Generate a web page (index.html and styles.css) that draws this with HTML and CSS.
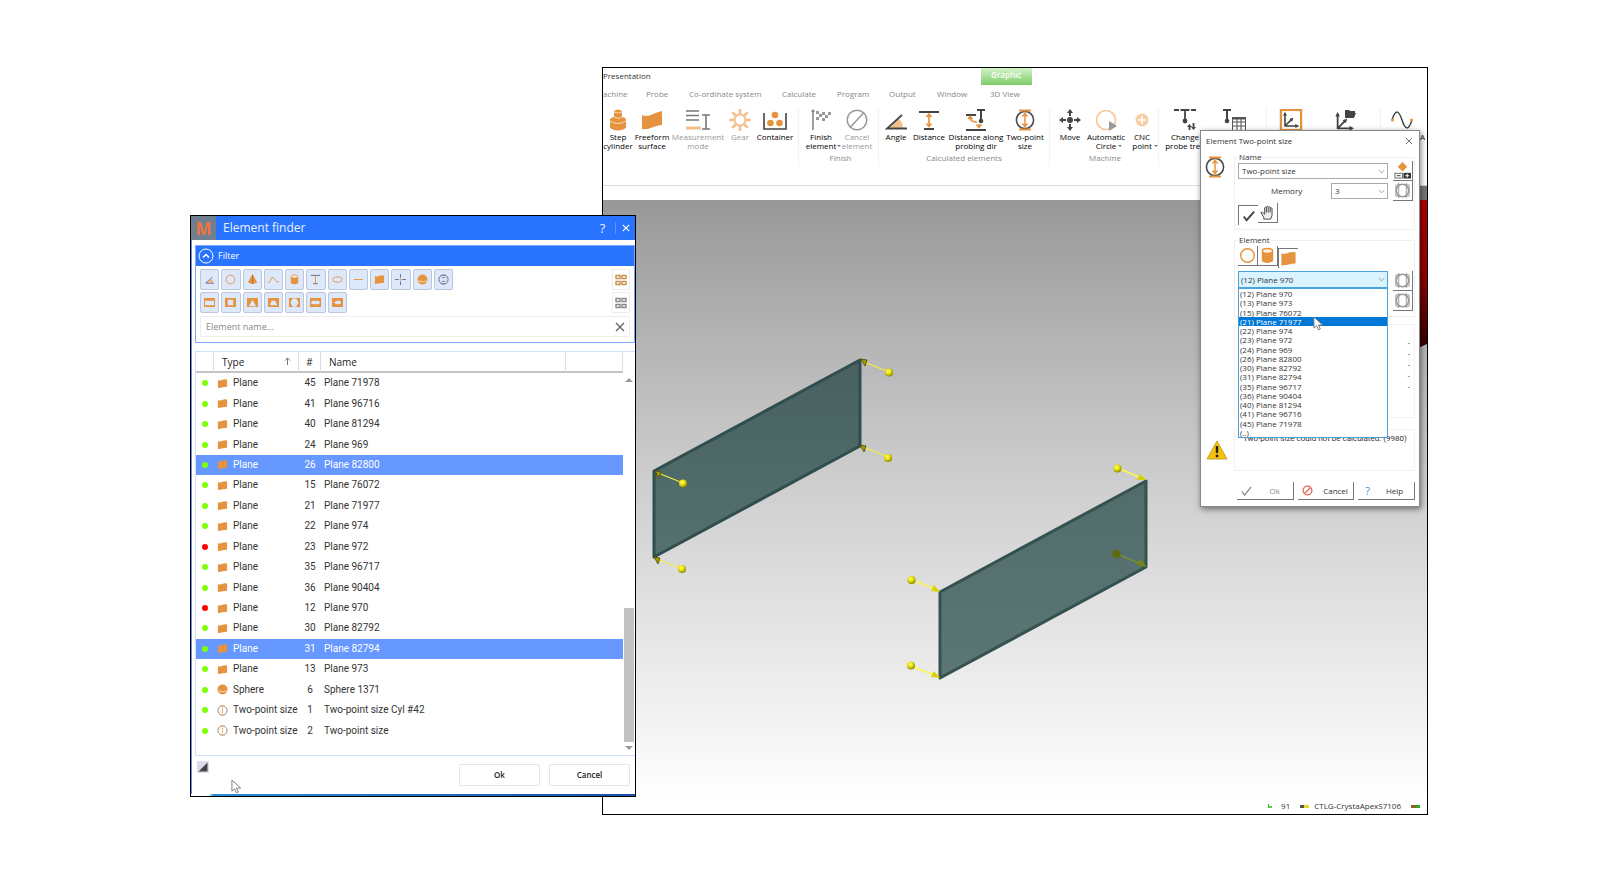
FILE: index.html
```html
<!DOCTYPE html>
<html lang="en">
<head>
<meta charset="utf-8">
<title>Element finder</title>
<link rel="stylesheet" href="styles.css">
</head>
<body>
<svg class="defs" aria-hidden="true">
  <defs>
    <symbol id="plane" viewBox="0 0 12 12"><path d="M1 2.500Q4 3 6 2T11 1.500V9.500Q8 9.500 6 10.200T1 11z" fill="#e5933f"/></symbol>
    <symbol id="sphere" viewBox="0 0 12 12"><circle cx="6" cy="6" r="5.500" fill="#e5933f"/><path d="M1 7.500Q6 9.500 11 7.500" stroke="#fbe0c2" fill="none"/></symbol>
    <symbol id="twopoint" viewBox="0 0 20 22"><circle cx="10" cy="11" r="8.600" fill="none" stroke="#4a4a4a" stroke-width="1.600"/><path d="M4 1.500h12M4 20.500h12" stroke="#e5933f" stroke-width="2"/><path d="M10 5v12M7.500 7.500L10 4.500l2.500 3M7.500 14.500l2.500 3 2.500-3" fill="none" stroke="#e5933f" stroke-width="1.500"/></symbol>
    <symbol id="twosmall" viewBox="0 0 12 12"><circle cx="6" cy="6" r="5" fill="none" stroke="#8f8378"/><path d="M3.500 1h5M3.500 11h5M6 3v6" stroke="#e9a768" fill="none"/></symbol>
    <symbol id="cylinder" viewBox="0 0 12 12"><path d="M2 3v7q4 2.500 8 0V3z" fill="#e5933f"/><ellipse cx="6" cy="2.800" rx="3.600" ry="1.700" fill="#fff1df" stroke="#e5933f"/></symbol>
    <symbol id="ring" viewBox="0 0 12 12"><circle cx="6" cy="6" r="4.800" fill="none" stroke="#e5933f"/></symbol>
    <symbol id="chevron" viewBox="0 0 10 6"><path d="M1 1l4 4 4-4" fill="none" stroke="#777"/></symbol>
    <symbol id="pick" viewBox="0 0 18 18"><rect x="2" y="3" width="14" height="12" rx="1" fill="none" stroke="#aaa" stroke-width="1.300"/><circle cx="9" cy="9" r="6.500" fill="#fff" stroke="#999" stroke-width="1.600"/><path d="M5 1v16M13 1v16" stroke="#999"/></symbol>
    <symbol id="axes" viewBox="0 0 22 22"><path d="M4 2v16h16M4 18l9-9" fill="none" stroke="#444" stroke-width="2"/><path d="M4 0L1.500 5h5zM22 18l-5-2.500v5zM14.500 7.500l-5 1.500 3.500 3.500z" fill="#444"/></symbol>
    <symbol id="grid" viewBox="0 0 12 12"><path d="M1 1.500h4v3H1zM7 1.500h4v3H7zM1 7.500h4v3H1zM7 7.500h4v3H7z" fill="none" stroke="currentColor" stroke-width="1.400"/></symbol>
    <symbol id="pointer" viewBox="0 0 12 16"><path d="M1 1v12l3-2.500 2 4.500 2-1-2-4.300h4.500z" fill="#fff" stroke="#777"/></symbol>
    <linearGradient id="sky" x1="0" y1="0" x2="0" y2="1"><stop offset="0" stop-color="#989898"/><stop offset=".24" stop-color="#b5b5b5"/><stop offset=".42" stop-color="#c9c9c9"/><stop offset=".65" stop-color="#dfdfdf"/><stop offset=".84" stop-color="#f0f0f0"/><stop offset="1" stop-color="#fff"/></linearGradient>
    <linearGradient id="steel" x1="0" y1="0" x2="0" y2="1"><stop offset="0" stop-color="#486160"/><stop offset="1" stop-color="#54706f"/></linearGradient>
    <linearGradient id="steel2" x1="0" y1="0" x2="0" y2="1"><stop offset="0" stop-color="#526c6c"/><stop offset="1" stop-color="#5c7675"/></linearGradient>
    <linearGradient id="red" x1="0" y1="0" x2="0" y2="1"><stop offset="0" stop-color="#b00000"/><stop offset=".5" stop-color="#980000"/><stop offset="1" stop-color="#300"/></linearGradient>
    <radialGradient id="ball" cx=".4" cy=".35" r=".65"><stop offset="0" stop-color="#ffff60"/><stop offset=".5" stop-color="#e6e010"/><stop offset="1" stop-color="#8a8600"/></radialGradient>
  </defs>
</svg>
<main class="desktop">
  <section class="window app" aria-label="Presentation">
    <header class="app-title"><span>Presentation</span><span class="context-tab">Graphic</span></header>
    <nav class="tabs">
      <a href="#" class="t1">achine</a><a href="#" class="t2">Probe</a><a href="#" class="t3">Co-ordinate system</a><a href="#" class="t4">Calculate</a><a href="#" class="t5">Program</a><a href="#" class="t6">Output</a><a href="#" class="t7">Window</a><a href="#" class="t8">3D View</a>
    </nav>
    <div class="ribbon">
      <div class="group g1">
        <div class="tools">
          <button class="tool w30"><svg viewBox="0 0 22 22"><path d="M7 2q4-3 8 0v6q4 .5 4 3v8q-8 5-16 0v-8q0-2.500 4-3z" fill="#e5933f"/><path d="M7 8q4 3 8 0M3 12q8 5 16 0M7 3q4 2 8 0" fill="none" stroke="#fbd9b3"/></svg>Step cylinder</button>
          <button class="tool w38"><svg viewBox="0 0 22 22"><path d="M1 6q5 2 10-.5T21 2v14q-5 0-10 2.500T1 20z" fill="#e5933f"/></svg>Freeform surface</button>
          <button class="tool w54 off"><svg viewBox="0 0 26 22"><path d="M1 2h13M1 6.500h13M1 11h13M17 6h8M17 20h8M21 6v14" fill="none" stroke="#777" stroke-width="1.600"/><path d="M1 19h15" stroke="#f3c08d" stroke-width="3"/></svg>Measurement mode</button>
          <button class="tool w30 off"><svg viewBox="0 0 22 22"><circle cx="11" cy="11" r="5.500" fill="none" stroke="#f4bf8c" stroke-width="2"/><path d="M11 0v5M11 17v5M0 11h5M17 11h5M3.200 3.200l3.500 3.500M15.300 15.300l3.500 3.500M3.200 18.800l3.500-3.500M15.300 6.700l3.500-3.500" stroke="#f4bf8c" stroke-width="2.600"/></svg>Gear</button>
          <button class="tool w40"><svg viewBox="0 0 24 22"><path d="M1 4v16h22V4" fill="none" stroke="#444" stroke-width="1.600"/><circle cx="12" cy="6" r="3.300" fill="#e5933f"/><circle cx="7.500" cy="14" r="3.300" fill="#e5933f"/><circle cx="16.500" cy="14" r="3.300" fill="#e5933f"/></svg>Container</button>
        </div>
      </div>
      <div class="group g2">
        <div class="tools">
          <button class="tool w36"><svg viewBox="0 0 22 22"><path d="M3 1v20" stroke="#888" stroke-width="1.600"/><circle cx="3" cy="2" r="1.600" fill="#888"/><path d="M6 2h3v3H6zM12 3h3v3h-3zM9 5h3v3H9zM15 6h3v3h-3zM6 8h3v3H6zM12 9h3v3h-3zM18 3h3v3h-3z" fill="#999"/></svg>Finish element<i class="drop"></i></button>
          <button class="tool w36 off"><svg viewBox="0 0 22 22"><circle cx="11" cy="11" r="9.800" fill="none" stroke="#999" stroke-width="1.500"/><path d="M4.500 18L17.500 4" stroke="#999" stroke-width="1.500"/></svg>Cancel element</button>
        </div>
        <span class="caption">Finish</span>
      </div>
      <div class="group g3">
        <div class="tools">
          <button class="tool w34"><svg viewBox="0 0 22 22"><path d="M13 9q5 4 5 10H5z" fill="#f3c08d"/><path d="M17 6L2 19.500h20" fill="none" stroke="#444" stroke-width="1.800"/></svg>Angle</button>
          <button class="tool w32"><svg viewBox="0 0 22 22"><path d="M1 3h20M6 20h10" stroke="#444" stroke-width="1.800"/><path d="M11 5v12M8.500 8L11 5l2.500 3M8.500 14.500l2.500 3 2.500-3" fill="none" stroke="#e5933f" stroke-width="1.700"/></svg>Distance</button>
          <button class="tool w62"><svg viewBox="0 0 22 22"><path d="M1 6h10M1 21h20M12 1h8M16 1v11" stroke="#444" stroke-width="2"/><circle cx="16" cy="12" r="2.300" fill="#444"/><path d="M5 8q0 5 7 5M3 10l2-2.500L7.500 10M14 15v3M11.500 15.500l2.500 3 2.500-3" fill="none" stroke="#e5933f" stroke-width="1.600"/></svg>Distance along probing dir</button>
          <button class="tool w36"><svg viewBox="0 0 20 22"><use href="#twopoint"/></svg><span class="keep">Two-point</span>size</button>
        </div>
        <span class="caption">Calculated elements</span>
      </div>
      <div class="group g4">
        <div class="tools">
          <button class="tool w36"><svg viewBox="0 0 22 22"><circle cx="11" cy="11" r="3" fill="#444"/><path d="M11 0l3 4h-2v3h-2V4H8zM11 22l3-4h-2v-3h-2v3H8zM0 11l4-3v2h3v2H4v2zM22 11l-4-3v2h-3v2h3v2z" fill="#444"/></svg>Move</button>
          <button class="tool w36"><svg viewBox="0 0 22 22"><circle cx="11" cy="11" r="9.500" fill="none" stroke="#f6c79a" stroke-width="1.700"/><path d="M14 12l8 5-8 5z" fill="#999"/></svg>Automatic Circle<i class="drop in"></i></button>
          <button class="tool w36"><svg viewBox="0 0 22 22"><circle cx="11" cy="11" r="6.500" fill="#f6cda4"/><path d="M11 7v8M7 11h8" stroke="#fff" stroke-width="1.500"/></svg>CNC point<i class="drop in"></i></button>
        </div>
        <span class="caption">Machine</span>
      </div>
      <div class="group g5">
        <div class="tools">
          <button class="tool w52"><svg viewBox="0 0 22 22"><path d="M0 1h5M6.500 1h9M17 1h5M11 1v11M15.500 17v4M19.500 14v4" fill="none" stroke="#444" stroke-width="1.800"/><circle cx="11" cy="12" r="2.400" fill="#444"/><path d="M15.500 15l2.500 3h-5zM19.500 21l2.500-3h-5z" fill="#444"/></svg>Change probe tree</button>
          <button class="tool w46" aria-label="Probe table"><svg viewBox="0 0 24 22"><path d="M1 1h8M5 1v11" stroke="#444" stroke-width="2"/><circle cx="5" cy="12" r="2.300" fill="#444"/><path d="M10.500 8.500h13v13h-13zM10.500 13h13M10.500 17h13M15 9v13M19 9v13" fill="none" stroke="#555"/><path d="M10 8h14v2.500H10z" fill="#555"/></svg></button>
        </div>
      </div>
      <div class="group g6">
        <div class="tools">
          <button class="tool w48" aria-label="Co-ordinate axes"><svg viewBox="0 0 24 24"><rect x="1" y="1" width="22" height="22" fill="#fff" stroke="#e5933f" stroke-width="2.500"/><use href="#axes" x="2" y="3" width="19" height="19"/></svg></button>
          <button class="tool w60" aria-label="Load axes"><svg viewBox="0 0 22 22"><use href="#axes" y="3" width="20" height="20"/><path d="M11 1h4l1 1h5v2h1l-2 5h-9z" fill="#444"/></svg></button>
        </div>
      </div>
      <div class="group g7">
        <div class="tools">
          <button class="tool w36" aria-label="Curve"><svg viewBox="0 0 22 22"><path d="M1 11C5-1 8 2 11 11s6 12 10 0" fill="none" stroke="#444" stroke-width="1.500"/><circle cx="1.500" cy="11" r="1.500" fill="#e5933f"/><circle cx="20.500" cy="11" r="1.500" fill="#e5933f"/></svg></button>
          <button class="tool w36 edge" aria-label="Analysis"><svg viewBox="0 0 22 22"></svg>A</button>
        </div>
      </div>
    </div>
    <div class="strip"><i></i></div>
    <svg class="scene" viewBox="603 200 824 600" preserveAspectRatio="none" role="img" aria-label="Two measured planes">
      <rect x="603" y="200" width="824" height="600" fill="url(#sky)"/>
      <path d="M1418 200h9v144l-9 4z" fill="url(#red)"/>
      <path d="M860 360V446L654 557V471z" fill="url(#steel)" stroke="#2f4e4d" stroke-width="3" stroke-linejoin="round"/>
      <g stroke="#f2ee3c" stroke-width="1.300"><path d="M864 362l25 10M863 447l25 10M658 473l25 10M657 559l25 10"/></g>
      <g fill="#a39b00" stroke="#4e4a00" stroke-width=".8"><path d="M861 359l6 1-2 6zM860 445l6 1-2 6zM655 471l6 1-2 6zM654 557l6 1-2 6z"/></g>
      <g fill="url(#ball)"><circle cx="889" cy="372.500" r="4"/><circle cx="888" cy="458" r="4"/><circle cx="683" cy="483.500" r="4"/><circle cx="682" cy="569" r="4"/></g>
      <path d="M1146 481V567L940 678V592z" fill="url(#steel2)" stroke="#34524f" stroke-width="3" stroke-linejoin="round"/>
      <path d="M1117 554l24 10" stroke="#8a9420" stroke-width="1.300"/><circle cx="1116.500" cy="554" r="4" fill="#5f6a06"/><path d="M1147 567l-10-2 3-6z" fill="#7a8414"/>
      <g stroke="#fbf84a" stroke-width="1.500"><path d="M1118 468l23 10M912 580l23 9M911 666l23 9"/></g>
      <g fill="#d8d300"><path d="M1146 480l-9 0 3-6zM940 592l-9-1 3-6zM940 678l-9-1 3-6z"/></g>
      <g fill="url(#ball)"><circle cx="1117.500" cy="468.500" r="4"/><circle cx="911.500" cy="580" r="4"/><circle cx="911" cy="665.500" r="4"/></g>
    </svg>
    <footer class="status"><i class="signal"></i><span>91</span><i class="link"></i><span class="machine">CTLG-CrystaApexS7106</span><i class="link ok"></i></footer>
  </section>

  <section class="window finder" aria-label="Element finder">
    <header class="finder-title"><b class="logo">M</b><h1>Element finder</h1><button aria-label="Help">?</button><button class="shut" aria-label="Close"><svg viewBox="0 0 10 10"><path d="M1 1l8 8M9 1L1 9" stroke="#fff" stroke-width="1.500"/></svg></button></header>
    <div class="finder-body">
      <div class="filter">
        <button class="filter-head"><svg viewBox="0 0 16 16"><circle cx="8" cy="8" r="7" fill="none" stroke="#fff"/><path d="M5 9.500l3-3 3 3" fill="none" stroke="#fff" stroke-width="1.500"/></svg>Filter</button>
        <div class="filter-grid">
          <div class="chips">
            <button aria-label="Angle"><svg viewBox="0 0 12 12"><path d="M9 3.500L2 10h9" fill="none" stroke="#667"/><path d="M8 5q2 2 2 4.500H4z" fill="#eab37c"/></svg></button>
            <button aria-label="Circle"><svg viewBox="0 0 12 12"><use href="#ring"/></svg></button>
            <button aria-label="Cone"><svg viewBox="0 0 12 12"><path d="M6 0l5 9q-5 3.500-10 0z" fill="#e5933f"/><path d="M6 1v10" stroke="#b9722c"/></svg></button>
            <button aria-label="Curve"><svg viewBox="0 0 12 12"><path d="M0 9.500q2.500 0 3-3.500t3-1.500 3 3.500 3 0" fill="none" stroke="#e5933f"/></svg></button>
            <button aria-label="Cylinder"><svg viewBox="0 0 12 12"><use href="#cylinder"/></svg></button>
            <button aria-label="Distance"><svg viewBox="0 0 12 12"><path d="M1 1.500h10M3.500 10.500h5" stroke="#667"/><path d="M6 2v8" stroke="#e5933f"/></svg></button>
            <button aria-label="Ellipse"><svg viewBox="0 0 12 12"><ellipse cx="6" cy="6" rx="5" ry="2.800" fill="none" stroke="#e5933f"/></svg></button>
            <button aria-label="Line"><svg viewBox="0 0 12 12"><path d="M1 6h10" stroke="#e5933f"/></svg></button>
            <button aria-label="Plane"><svg viewBox="0 0 12 12"><use href="#plane"/></svg></button>
            <button aria-label="Point"><svg viewBox="0 0 12 12"><path d="M6 0v4M6 8v4M0 6h4M8 6h4" stroke="#5c6f92"/><circle cx="6" cy="6" r="1" fill="#e5933f"/></svg></button>
            <button aria-label="Sphere"><svg viewBox="0 0 12 12"><use href="#sphere"/></svg></button>
            <button aria-label="Two-point size"><svg viewBox="0 0 12 12"><circle cx="6" cy="6" r="5" fill="none" stroke="#667"/><path d="M3 1.500h6M3 10.500h6M4 4h4M4 8h4" stroke="#78829a"/></svg></button>
            <button aria-label="Slot"><svg viewBox="0 0 12 12"><path d="M0 1h12v10H0zM1 4v5h10V4z" fill="#e5933f" fill-rule="evenodd"/></svg></button>
            <button aria-label="Square"><svg viewBox="0 0 12 12"><path d="M0 1h12v10H0zM3 3v6h6V3z" fill="#e5933f" fill-rule="evenodd"/></svg></button>
            <button aria-label="Triangle"><svg viewBox="0 0 12 12"><path d="M0 1h12v10H0zM6 3L2 10h8z" fill="#e5933f" fill-rule="evenodd"/></svg></button>
            <button aria-label="Trapezoid"><svg viewBox="0 0 12 12"><path d="M0 1h12v10H0zM4 4L2 9h8L8 4z" fill="#e5933f" fill-rule="evenodd"/></svg></button>
            <button aria-label="Hexagon"><svg viewBox="0 0 12 12"><path d="M0 1h12v10H0zM4 1.500L1.500 6 4 10.500h4L10.500 6 8 1.500z" fill="#e5933f" fill-rule="evenodd"/></svg></button>
            <button aria-label="Long slot"><svg viewBox="0 0 12 12"><path d="M0 1h12v10H0zM3 4q-4 2 0 4h6q4-2 0-4z" fill="#e5933f" fill-rule="evenodd"/></svg></button>
            <button aria-label="Drop"><svg viewBox="0 0 12 12"><path d="M0 1h12v10H0zM2 6l3-2h3q4 2 0 4H5z" fill="#e5933f" fill-rule="evenodd"/></svg></button>
          </div>
          <div class="selectors"><button class="all" aria-label="Select all"><svg><use href="#grid"/></svg></button><button aria-label="Select none"><svg><use href="#grid"/></svg></button></div>
        </div>
        <div class="search"><input type="text" placeholder="Element name..." aria-label="Element name"><button aria-label="Clear"><svg viewBox="0 0 10 10"><path d="M1 1l8 8M9 1L1 9" stroke="#666" stroke-width="1.400"/></svg></button></div>
      </div>
      <div class="list">
        <table>
          <colgroup><col class="c-state"><col class="c-type"><col class="c-num"><col><col class="c-extra"></colgroup>
          <thead><tr><th></th><th><span class="sort">Type<svg viewBox="0 0 8 10"><path d="M4 9V1M1 4l3-3 3 3" fill="none" stroke="#666"/></svg></span></th><th class="num">#</th><th>Name</th><th></th></tr></thead>
          <tbody>
            <tr><td><i class="dot"></i></td><td><span><svg><use href="#plane"/></svg>Plane</span></td><td class="num">45</td><td colspan="2">Plane 71978</td></tr>
            <tr><td><i class="dot"></i></td><td><span><svg><use href="#plane"/></svg>Plane</span></td><td class="num">41</td><td colspan="2">Plane 96716</td></tr>
            <tr><td><i class="dot"></i></td><td><span><svg><use href="#plane"/></svg>Plane</span></td><td class="num">40</td><td colspan="2">Plane 81294</td></tr>
            <tr><td><i class="dot"></i></td><td><span><svg><use href="#plane"/></svg>Plane</span></td><td class="num">24</td><td colspan="2">Plane 969</td></tr>
            <tr class="sel"><td><i class="dot"></i></td><td><span><svg><use href="#plane"/></svg>Plane</span></td><td class="num">26</td><td colspan="2">Plane 82800</td></tr>
            <tr><td><i class="dot"></i></td><td><span><svg><use href="#plane"/></svg>Plane</span></td><td class="num">15</td><td colspan="2">Plane 76072</td></tr>
            <tr><td><i class="dot"></i></td><td><span><svg><use href="#plane"/></svg>Plane</span></td><td class="num">21</td><td colspan="2">Plane 71977</td></tr>
            <tr><td><i class="dot"></i></td><td><span><svg><use href="#plane"/></svg>Plane</span></td><td class="num">22</td><td colspan="2">Plane 974</td></tr>
            <tr><td><i class="dot bad"></i></td><td><span><svg><use href="#plane"/></svg>Plane</span></td><td class="num">23</td><td colspan="2">Plane 972</td></tr>
            <tr><td><i class="dot"></i></td><td><span><svg><use href="#plane"/></svg>Plane</span></td><td class="num">35</td><td colspan="2">Plane 96717</td></tr>
            <tr><td><i class="dot"></i></td><td><span><svg><use href="#plane"/></svg>Plane</span></td><td class="num">36</td><td colspan="2">Plane 90404</td></tr>
            <tr><td><i class="dot bad"></i></td><td><span><svg><use href="#plane"/></svg>Plane</span></td><td class="num">12</td><td colspan="2">Plane 970</td></tr>
            <tr><td><i class="dot"></i></td><td><span><svg><use href="#plane"/></svg>Plane</span></td><td class="num">30</td><td colspan="2">Plane 82792</td></tr>
            <tr class="sel"><td><i class="dot"></i></td><td><span><svg><use href="#plane"/></svg>Plane</span></td><td class="num">31</td><td colspan="2">Plane 82794</td></tr>
            <tr><td><i class="dot"></i></td><td><span><svg><use href="#plane"/></svg>Plane</span></td><td class="num">13</td><td colspan="2">Plane 973</td></tr>
            <tr><td><i class="dot"></i></td><td><span><svg><use href="#sphere"/></svg>Sphere</span></td><td class="num">6</td><td colspan="2">Sphere 1371</td></tr>
            <tr><td><i class="dot"></i></td><td><span><svg><use href="#twosmall"/></svg>Two-point size</span></td><td class="num">1</td><td colspan="2">Two-point size Cyl #42</td></tr>
            <tr><td><i class="dot"></i></td><td><span><svg><use href="#twosmall"/></svg>Two-point size</span></td><td class="num">2</td><td colspan="2">Two-point size</td></tr>
          </tbody>
        </table>
        <div class="scrollbar"><i class="up"></i><i class="thumb"></i><i class="down"></i></div>
      </div>
      <footer class="finder-foot">
        <svg class="corner" viewBox="0 0 12 12"><rect width="12" height="12" fill="#dcdcea"/><path d="M10.500 1.500v9h-9z" fill="#444"/></svg>
        <svg class="pointer"><use href="#pointer"/></svg>
        <button>Ok</button><button>Cancel</button>
      </footer>
    </div>
    <div class="taskline"></div>
  </section>

  <section class="dialog" aria-label="Element Two-point size">
    <header class="dialog-title"><h2>Element Two-point size</h2><button aria-label="Close"><svg viewBox="0 0 10 10"><path d="M1 1l8 8M9 1L1 9" stroke="#555"/></svg></button></header>
    <div class="dialog-grid">
      <svg class="big" viewBox="0 0 20 22"><use href="#twopoint"/></svg>
      <fieldset class="f-name">
        <legend>Name</legend>
        <div class="line"><span class="combo"><select aria-label="Name"><option>Two-point size</option></select><svg><use href="#chevron"/></svg></span>
          <button class="raised" aria-label="Add or remove"><svg viewBox="0 0 18 18"><path d="M9 0l5 5-5 5-5-5z" fill="#e5933f"/><rect x="1" y="12" width="8" height="5" fill="#fff" stroke="#666"/><rect x="10" y="11.500" width="8" height="6" fill="#333"/><path d="M3 14.500h4" stroke="#333"/><path d="M12 14.500h4M14 12.500v4" stroke="#fff"/></svg></button></div>
        <div class="line end"><label for="memory">Memory</label><span class="combo short"><select id="memory"><option>3</option></select><svg><use href="#chevron"/></svg></span><button class="raised" aria-label="Pick memory"><svg><use href="#pick"/></svg></button></div>
        <div class="line"><button class="raised down" aria-label="Accept"><svg viewBox="0 0 18 18"><path d="M4 10l3 4 8-9" fill="none" stroke="#444" stroke-width="2"/></svg></button><button class="raised" aria-label="Manual"><svg viewBox="0 0 18 18"><path d="M5 16v-2l-3-5 1.500-.5L6 11V4q1-1 1.800 0V3q1-1 2 0v.5q1-1 2 0v1q1-1 2 0V12l-1.500 4z" fill="#eee" stroke="#444"/><path d="M7.800 4v5M9.800 4v5M11.800 4.500V9" stroke="#444"/></svg></button></div>
      </fieldset>
      <fieldset class="f-element">
        <legend>Element</legend>
        <div class="line"><button class="raised" aria-label="Circle"><svg viewBox="0 0 12 12"><use href="#ring"/></svg></button><button class="raised" aria-label="Cylinder"><svg viewBox="0 0 12 12"><use href="#cylinder"/></svg></button><button class="raised down" aria-label="Plane"><svg viewBox="0 0 12 12"><use href="#plane"/></svg></button></div>
        <div class="line open-line">
          <div class="combo open"><select aria-label="Element"><option>(12) Plane 970</option></select><svg><use href="#chevron"/></svg>
            <ul class="options" role="listbox" aria-label="Elements"><li>(12) Plane 970</li><li>(13) Plane 973</li><li>(15) Plane 76072</li><li class="hot">(21) Plane 71977<svg class="pointer"><use href="#pointer"/></svg></li><li>(22) Plane 974</li><li>(23) Plane 972</li><li>(24) Plane 969</li><li>(26) Plane 82800</li><li>(30) Plane 82792</li><li>(31) Plane 82794</li><li>(35) Plane 96717</li><li>(36) Plane 90404</li><li>(40) Plane 81294</li><li>(41) Plane 96716</li><li>(45) Plane 71978</li><li>(..)</li></ul>
          </div>
          <div class="picks"><button class="raised" aria-label="Pick first"><svg><use href="#pick"/></svg></button><button class="raised" aria-label="Pick second"><svg><use href="#pick"/></svg></button></div>
        </div>
      </fieldset>
      <div class="panel results"><span>-</span><span>-</span><span>-</span><span>-</span><span>-</span></div>
      <svg class="warn" viewBox="0 0 22 20"><path d="M11 1l10 18H1z" fill="#f4c20d" stroke="#c9a227" stroke-linejoin="round"/><path d="M11 6v7" stroke="#222" stroke-width="2.400"/><circle cx="11" cy="16" r="1.400" fill="#222"/></svg>
      <div class="panel message">Two-point size could not be calculated. (9980)</div>
      <div class="actions">
        <button class="raised" disabled><svg viewBox="0 0 12 12"><path d="M1 7l3 4 7-9" fill="none" stroke="#888" stroke-width="1.400"/></svg><span>Ok</span></button>
        <button class="raised"><svg viewBox="0 0 12 12"><circle cx="6" cy="6" r="4.800" fill="none" stroke="#e0604c" stroke-width="1.300"/><path d="M3 9l6-6" stroke="#e0604c" stroke-width="1.300"/></svg><span>Cancel</span></button>
        <button class="raised"><b>?</b><span>Help</span></button>
      </div>
    </div>
  </section>
</main>
</body>
</html>
```
FILE: styles.css
```css
* { box-sizing: border-box; }
body { margin: 0; background: #fff; color: #333; font: 10px/12px "Open Sans", "Noto Sans", sans-serif; }
button { margin: 0; padding: 0; border: 0; background: none; font: inherit; color: inherit; }
h1, h2, ul, fieldset { margin: 0; padding: 0; font-weight: 400; }
ul { list-style: none; }
svg { display: block; flex: none; }
.defs { position: absolute; width: 0; height: 0; }
.desktop { position: relative; min-height: 100vh; overflow: hidden; }
.window { position: absolute; border: 1px solid #000; background: #fff; overflow: hidden; }

/* Measuring application */
.app { top: 67px; bottom: 60px; left: 37.625%; right: 10.75%; display: flex; flex-direction: column; }
.app-title { display: flex; height: 17px; font-size: 8px; line-height: 16px; }
.context-tab { margin-left: 330px; width: 51px; background: linear-gradient(#d3f3c8, #7ccb66); color: #fff; font-weight: 600; text-align: center; line-height: 14px; }
.tabs { display: flex; height: 16px; font-size: 8px; line-height: 18px; }
.tabs a { color: #888; text-decoration: none; white-space: nowrap; }
.t1 { width: 43px; }
.t2 { width: 43px; }
.t3 { width: 93px; }
.t4 { width: 55px; }
.t5 { width: 52px; }
.t6 { width: 48px; }
.t7 { width: 53px; }
.ribbon { display: flex; height: 85px; padding-top: 6px; border-bottom: 1px solid #ddd; overflow: hidden; }
.group { display: flex; flex-direction: column; flex: none; height: 60px; border-right: 1px solid #f2f2f2; }
.tools { display: flex; height: 45px; }
.caption { text-align: center; font-size: 8px; line-height: 12px; color: #888; }
.g1 { width: 196px; }
.g2 { width: 80px; padding-left: 4px; }
.g3 { width: 171px; }
.g4 { width: 109px; padding-left: 2px; }
.g5 { width: 108px; }
.g6 { width: 114px; }
.g7 { width: 60px; border: 0; padding-left: 3px; }
.tool { position: relative; display: flex; flex-direction: column; align-items: center; justify-content: flex-start; flex: none; height: 45px; font-size: 8px; line-height: 9px; color: #000; text-align: center; }
.tool > svg { width: 100%; height: 22px; margin: 2px 0 1px; }
.tool.off { color: #999; }
.keep { white-space: nowrap; }
.drop { position: absolute; right: -2px; bottom: 3px; border: 2px solid transparent; border-top-color: #777; }
.drop.in { right: 2px; }
.w30 { width: 30px; }
.w32 { width: 32px; }
.w34 { width: 34px; }
.w36 { width: 36px; }
.w38 { width: 38px; }
.w40 { width: 40px; }
.w46 { width: 46px; }
.w48 { width: 48px; }
.w52 { width: 52px; }
.w54 { width: 54px; }
.w60 { width: 60px; }
.w62 { width: 62px; }
.edge { align-items: flex-start; }
.strip { display: flex; justify-content: flex-end; height: 14px; }
.strip i { width: 8px; background: #777; }
.scene { flex: 1; width: 100%; min-height: 0; }
.status { display: flex; align-items: center; justify-content: flex-end; gap: 5px; height: 14px; padding: 0 7px 2px 0; font-size: 8px; color: #333; }
.signal { width: 4px; height: 4px; margin-right: 4px; border-left: 1px solid #3a3; border-bottom: 2px solid #5c5; }
.link { width: 9px; height: 3px; margin-left: 5px; background: linear-gradient(90deg, #555 50%, #e8dd20 50%); }
.link.ok { background: linear-gradient(90deg, #862 50%, #2a2 50%); }

/* Element finder */
.finder { top: 215px; left: 11.875%; width: 27.875%; }
.finder-title { display: flex; align-items: center; height: 24px; background: #2874ff; color: #e8f0ff; }
.logo { width: 25px; height: 24px; background: #708090; color: #f0743a; font-size: 17px; line-height: 25px; text-align: center; }
.finder-title h1 { flex: 1; padding-left: 7px; font-size: 12px; line-height: 22px; }
.finder-title button { width: 15px; font-size: 13px; line-height: 20px; }
.finder-title .shut { display: flex; justify-content: center; width: 20px; border-left: 1px solid #5c96ff; padding: 2px 0; margin-left: 5px; }
.shut svg { width: 8px; height: 8px; }
.finder-body { padding: 5px 0 0 3px; border-left: 1px solid #5c90f5; }
.filter { border: 1px solid #7aa8ff; padding-bottom: 5px; }
.filter-head { display: flex; align-items: center; gap: 4px; width: 100%; height: 20px; padding-left: 2px; background: #2874ff; color: #fff; font-size: 9px; }
.filter-head svg { width: 16px; height: 16px; }
.filter-grid { display: flex; justify-content: space-between; padding: 3px 4px; }
.chips { display: grid; grid-template-columns: repeat(12, 1fr); gap: 2px; width: 253px; }
.chips button { display: flex; align-items: center; justify-content: center; height: 21px; border: 1px solid #b9c6dc; border-radius: 2px; background: #dde8fa; }
.chips svg { width: 11px; height: 11px; }
.selectors { display: grid; gap: 2px; }
.selectors button { display: flex; align-items: center; justify-content: center; width: 18px; border: 1px solid #eee; color: #888; }
.selectors .all { color: #c98f50; }
.selectors svg { width: 12px; height: 12px; }
.search { display: flex; align-items: center; height: 21px; margin: 0 4px; border: 1px solid #eee; }
.search input { flex: 1; min-width: 0; border: 0; outline: 0; padding: 0 5px; font: inherit; font-size: 9px; }
.search input::placeholder { color: #888; opacity: 1; }
.search button { padding: 4px; }
.search svg { width: 10px; height: 10px; }
.list { display: flex; height: 405px; margin-top: 8px; border: 1px solid #cfe0fb; border-right: 0; }
table { flex: 1; width: 100%; height: 389px; table-layout: fixed; border-collapse: separate; border-spacing: 0; }
.c-state { width: 18px; }
.c-type { width: 85px; }
.c-num { width: 22px; }
.c-extra { width: 57px; }
th { height: 21px; padding: 0 0 0 8px; border-right: 1px solid #ddd; border-bottom: 2px solid #c4c4c4; font-weight: 400; text-align: left; color: #222; }
td { padding: 0 0 0 3px; white-space: nowrap; font-family: Roboto, sans-serif; }
th.num, td.num { padding: 0; text-align: center; }
td span { display: flex; align-items: center; gap: 5px; }
td svg { width: 11px; height: 11px; }
.sort { display: flex; align-items: center; justify-content: space-between; padding-right: 7px; }
.sort svg { width: 7px; height: 9px; }
.dot { display: block; width: 6px; height: 6px; margin-left: 3px; border-radius: 50%; background: #7dff0a; }
.dot.bad { background: #f00; }
.sel { background: #6698ff; color: #fff; }
.scrollbar { display: flex; flex-direction: column; align-items: center; width: 12px; padding: 26px 1px 5px; }
.up { border: 4px solid transparent; border-top: 0; border-bottom-color: #999; }
.down { margin-top: 4px; border: 4px solid transparent; border-bottom: 0; border-top-color: #999; }
.thumb { width: 10px; height: 134px; margin-top: auto; background: #c2c2c2; }
.finder-foot { display: flex; gap: 9px; padding: 5px 5px 8px 2px; }
.finder-foot button { width: 81px; height: 22px; margin-top: 3px; border: 1px solid #e6e6e6; border-radius: 2px; font-size: 8px; font-weight: 600; color: #222; }
.corner { width: 12px; height: 12px; }
.finder-foot .pointer { width: 11px; height: 15px; margin: 18px auto -8px 13px; }
.taskline { height: 2px; background: linear-gradient(90deg, #fff 4%, #2a8fd8 5%, #1c4fa8); }

/* Two-point size dialog */
.dialog { position: absolute; top: 130px; right: 11.25%; width: 220px; border: 1px solid #888; background: #fff; box-shadow: 1px 2px 6px rgba(0, 0, 0, .5); font-size: 8px; line-height: 10px; }
.dialog-title { display: flex; justify-content: space-between; align-items: center; height: 22px; padding: 0 6px 2px 5px; }
.dialog-title h2 { font-size: 8px; line-height: 12px; }
.dialog-title svg { width: 8px; height: 8px; }
.dialog-grid { display: grid; grid-template-columns: 33px 1fr; padding: 0 4px 6px 0; }
.big { width: 20px; height: 22px; margin: 3px 0 0 4px; }
fieldset { min-width: 0; border: 1px solid #f0f0f0; padding: 0 1px 0 3px; }
legend { padding: 0 1px; line-height: 8px; }
.f-name { height: 77px; }
.f-element { grid-column: 2; height: 81px; margin-top: 6px; }
.line { display: flex; align-items: center; min-height: 20px; }
.end { justify-content: flex-end; }
.end label { margin-right: auto; padding-left: 33px; }
.combo { position: relative; flex: 1; margin-right: 5px; }
.combo.short { flex: none; width: 57px; }
.combo select { display: block; width: 100%; height: 16px; padding: 0 3px; border: 1px solid #aaa; border-radius: 0; background: #fff; color: #333; appearance: none; font: inherit; }
.combo > svg { position: absolute; right: 3px; top: 6px; width: 7px; height: 5px; }
.combo.open select { height: 17px; padding: 0 2px; border-color: #4aa3dc; background: #d9f3ff; }
.open-line { align-items: flex-start; margin-top: 3px; }
.raised { display: flex; align-items: center; justify-content: center; width: 20px; height: 20px; border-right: 1px solid #777; border-bottom: 1px solid #777; }
.raised.down { border: 0; border-left: 1px solid #777; border-top: 1px solid #777; }
.raised svg { width: 17px; height: 17px; }
.options { position: absolute; z-index: 1; top: 17px; left: 0; right: 0; display: grid; grid-auto-rows: 1fr; height: 150px; border: 1px solid #4aa3dc; background: #fff; }
.options li { padding-left: 1px; line-height: 9px; }
.options .hot { position: relative; background: #0078d7; color: #fff; }
.hot .pointer { position: absolute; left: 74px; top: -1px; width: 11px; height: 15px; }
.panel { grid-column: 2; border: 1px solid #f2f2f2; }
.results { display: flex; flex-direction: column; gap: 1px; height: 94px; margin-top: 7px; padding: 12px 4px 0 0; text-align: right; }
.warn { width: 22px; height: 20px; margin: 22px 0 0 5px; }
.message { height: 42px; margin-top: 11px; padding: 4px 0 0 8px; grid-column: auto; white-space: nowrap; font-family: Roboto, sans-serif; }
.actions { grid-column: 1 / -1; display: flex; gap: 4px; margin-top: 11px; padding-left: 36px; }
.actions .raised { flex: 1; height: 18px; padding: 0 0 0 4px; }
.actions span { flex: 1; padding-left: 5px; text-align: center; }
.actions svg { width: 11px; height: 11px; }
.actions b { padding-left: 3px; color: #4a90d9; font-size: 11px; font-weight: 400; }
.actions button:disabled { color: #888; }
```
